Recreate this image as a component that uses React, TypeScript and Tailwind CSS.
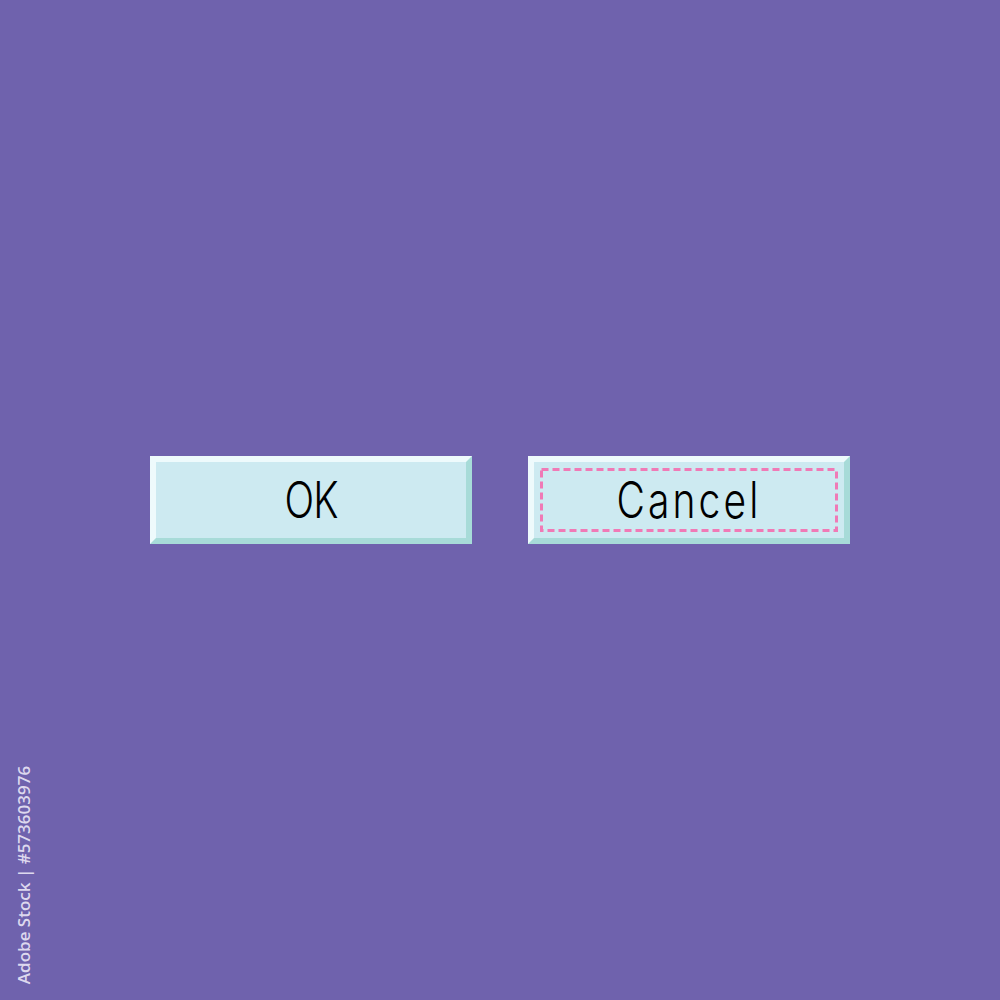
import React from 'react';

type BevelButtonProps = {
  label: string;
  focused?: boolean;
};

// Retro bevelled push button; the focused one gets a dotted focus ring
const BevelButton: React.FC<BevelButtonProps> = ({ label, focused }) => (
  <button
    className="relative w-[322px] h-[88px] bg-[#cdeaf1] border-[6px] border-t-[#eefafc] border-l-[#eefafc] border-b-[#a7dbd8] border-r-[#a7dbd8] flex items-center justify-center"
  >
    {focused && (
      <svg className="absolute left-[6px] top-[6px]" width="298" height="64" viewBox="0 0 298 64">
        <rect
          x="1.5"
          y="1.5"
          width="295"
          height="61"
          fill="none"
          stroke="#f07ab6"
          strokeWidth="3"
          strokeDasharray="7 4"
        />
      </svg>
    )}
    <span
      className={`text-black text-[50px] leading-none font-light scale-x-[0.78] [font-family:Inter,'DejaVu_Sans',sans-serif] ${
        focused ? 'tracking-[4px]' : 'tracking-[-1px]'
      }`}
    >
      {label}
    </span>
  </button>
);

export default function App() {
  return (
    <div className="relative w-[1000px] h-[1000px] bg-[#6f62ad] flex items-center justify-center gap-[56px] overflow-hidden">
      <BevelButton label="OK" />
      <BevelButton label="Cancel" focused />

      <div className="absolute left-[13px] bottom-[14px] h-[222px] w-[22px]">
        <span className="absolute left-1/2 top-1/2 -translate-x-1/2 -translate-y-1/2 -rotate-90 whitespace-nowrap text-[17px] font-semibold text-[#ddd8ee] [font-family:'Open_Sans',sans-serif]">
          Adobe Stock | #573603976
        </span>
      </div>
    </div>
  );
}
